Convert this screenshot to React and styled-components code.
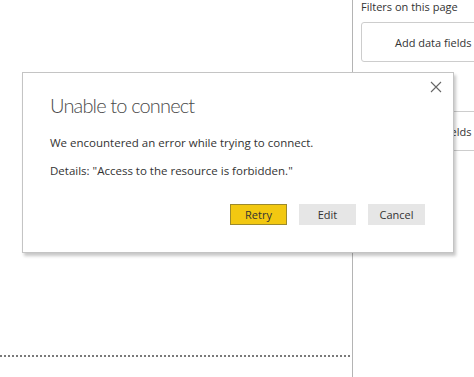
import styled, { createGlobalStyle } from "styled-components";

const GlobalStyle = createGlobalStyle`
  html, body {
    margin: 0;
    padding: 0;
    background: #fff;
  }
  body {
    font-family: "Segoe UI", "Open Sans", "Noto Sans", sans-serif;
    color: #333;
  }
`;

const Screen = styled.div`
  position: relative;
  display: flex;
  width: 474px;
  height: 377px;
  overflow: hidden;
`;

const Canvas = styled.div`
  width: 352px;
  display: flex;
  flex-direction: column;
  padding-top: 355px;
  box-sizing: border-box;
`;

const DottedLine = styled.div`
  width: 350px;
  border-top: 2px dotted #7a7a7a;
`;

const FilterPane = styled.aside`
  flex: 1;
  border-left: 1px solid #b4b4b4;
  padding-left: 8px;
  overflow: hidden;
`;

const PaneTitle = styled.div`
  padding-top: 1px;
  font-size: 11px;
  line-height: 12px;
  color: #333;
  white-space: nowrap;
`;

const FieldWell = styled.div`
  width: 140px;
  height: 40px;
  margin-top: ${(p) => p.$gap}px;
  border: 1px solid #cdcdcd;
  border-radius: 3px;
  display: flex;
  align-items: center;
  padding-left: 33px;
  box-sizing: border-box;
  font-size: 11px;
  color: #333;
  white-space: nowrap;
`;

const Dialog = styled.div`
  position: absolute;
  left: 22px;
  top: 72px;
  width: 432px;
  height: 181px;
  box-sizing: border-box;
  background: #fff;
  border: 1px solid #c4c4c4;
  box-shadow: 2px 3px 3px rgba(0, 0, 0, 0.22);
  padding: 19px 28px 0 27px;
  display: flex;
  flex-direction: column;
`;

const CloseButton = styled.button`
  position: absolute;
  top: 8px;
  right: 11px;
  width: 12px;
  height: 12px;
  padding: 0;
  border: none;
  background: none;
  display: flex;
  svg {
    width: 12px;
    height: 12px;
  }
`;

const Title = styled.h1`
  margin: 0;
  font-family: Lato, "Open Sans", sans-serif;
  font-size: 20px;
  letter-spacing: -0.85px;
  line-height: 26px;
  font-weight: 300;
  color: #4a4a4a;
`;

const Message = styled.p`
  margin: ${(p) => p.$top}px 0 0;
  font-size: 11.5px;
  line-height: 16px;
  color: #333;
`;

const Actions = styled.div`
  display: flex;
  justify-content: flex-end;
  gap: 12px;
  margin-top: 25px;
`;

const Button = styled.button`
  width: 57px;
  height: 21px;
  padding: 0;
  font-family: inherit;
  font-size: 11px;
  color: #333;
  background: ${(p) => (p.$primary ? "#f2c811" : "#e6e6e6")};
  border: 1px solid ${(p) => (p.$primary ? "#9c8a2c" : "#e6e6e6")};
`;

export default function App() {
  return (
    <>
      <GlobalStyle />
      <Screen>
        <Canvas>
          <DottedLine />
        </Canvas>
        <FilterPane>
          <PaneTitle>Filters on this page</PaneTitle>
          <FieldWell $gap={9}>Add data fields</FieldWell>
          <FieldWell $gap={49}>Add data fields</FieldWell>
        </FilterPane>
        <Dialog>
          <CloseButton aria-label="Close">
            <svg viewBox="0 0 12 12">
              <path d="M1 1 L11 11 M11 1 L1 11" stroke="#666" strokeWidth="1.1" fill="none" />
            </svg>
          </CloseButton>
          <Title>Unable to connect</Title>
          <Message $top={17}>We encountered an error while trying to connect.</Message>
          <Message $top={12}>Details: "Access to the resource is forbidden."</Message>
          <Actions>
            <Button $primary>Retry</Button>
            <Button>Edit</Button>
            <Button>Cancel</Button>
          </Actions>
        </Dialog>
      </Screen>
    </>
  );
}
